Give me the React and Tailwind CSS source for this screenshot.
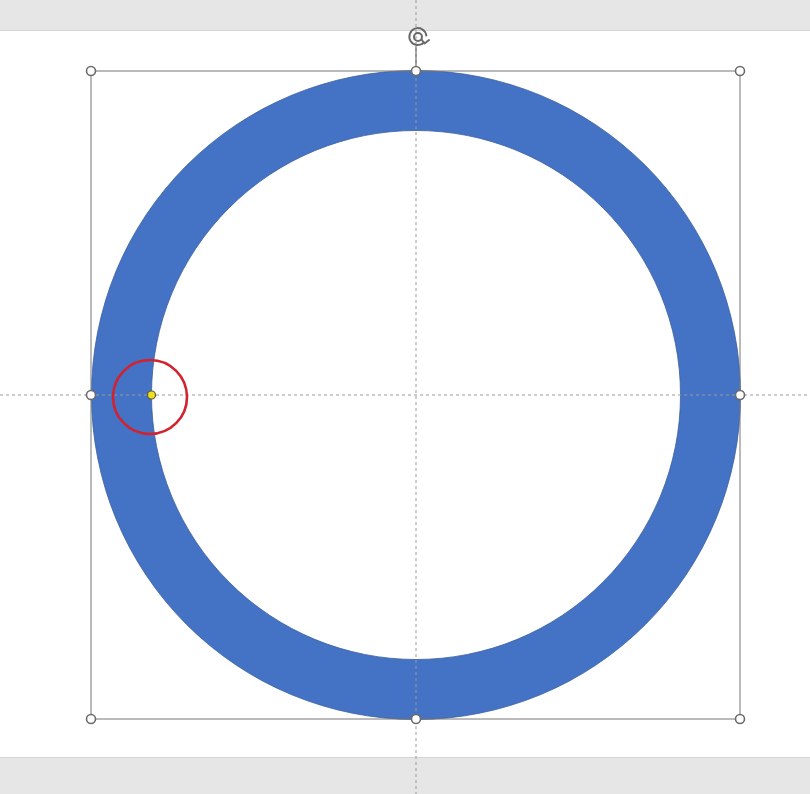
import React from "react";

// Canvas drawing: donut shape with selection frame, guides and handles
function Handle({ cx, cy }) {
  return <circle cx={cx} cy={cy} r="4.5" fill="#ffffff" stroke="#6b6b6b" strokeWidth="1.6" />;
}

function RotateIcon({ cx, cy }) {
  return (
    <g fill="none" stroke="#6a6a6a" strokeWidth="2" strokeLinecap="round" strokeLinejoin="round">
      <path d={`M ${cx + 6} ${cy + 5.5} A 8.5 8.5 0 1 1 ${cx + 8.3} ${cy - 1.5}`} />
      <circle cx={cx} cy={cy} r="4" />
      <path d={`M ${cx + 3.5} ${cy + 2.5} L ${cx + 6.5} ${cy + 6.5} L ${cx + 11} ${cy + 3}`} />
    </g>
  );
}

export default function App() {
  const cx = 416;
  const cy = 395;
  const outer = 324.5;
  const inner = 264.5;
  const left = 91;
  const right = 740;
  const top = 71;
  const bottom = 719;

  const ring =
    `M ${cx - outer} ${cy} A ${outer} ${outer} 0 1 0 ${cx + outer} ${cy} A ${outer} ${outer} 0 1 0 ${cx - outer} ${cy} Z ` +
    `M ${cx - inner} ${cy} A ${inner} ${inner} 0 1 0 ${cx + inner} ${cy} A ${inner} ${inner} 0 1 0 ${cx - inner} ${cy} Z`;

  return (
    <div className="relative w-[810px] h-[794px] flex flex-col overflow-hidden bg-white">
      <div className="h-[31px] bg-[#e6e6e6] border-b border-[#d6d6d6]" />
      <div className="flex-1 bg-white" />
      <div className="h-[37px] bg-[#e6e6e6] border-t border-[#d6d6d6]" />

      <svg className="absolute inset-0" width="810" height="794" viewBox="0 0 810 794">
        <path d={ring} fill="#4472c4" fillRule="evenodd" stroke="#3a5f9e" strokeWidth="0.8" />

        {/* guides */}
        <line x1={cx} y1="0" x2={cx} y2="794" stroke="#9a9a9a" strokeWidth="1" strokeDasharray="3 3" />
        <line x1="0" y1={cy} x2="810" y2={cy} stroke="#9a9a9a" strokeWidth="1" strokeDasharray="3 3" />

        {/* selection frame */}
        <rect x={left} y={top} width={right - left} height={bottom - top} fill="none" stroke="#777777" strokeWidth="1" />
        <line x1={cx} y1="46" x2={cx} y2={top} stroke="#6f6f6f" strokeWidth="1.2" />
        <RotateIcon cx={418} cy={37} />

        <Handle cx={left} cy={top} />
        <Handle cx={cx} cy={top} />
        <Handle cx={right} cy={top} />
        <Handle cx={left} cy={cy} />
        <Handle cx={right} cy={cy} />
        <Handle cx={left} cy={bottom} />
        <Handle cx={cx} cy={bottom} />
        <Handle cx={right} cy={bottom} />

        {/* adjustment handle */}
        <circle cx="151.5" cy={cy} r="4" fill="#f2df1a" stroke="#5a5a40" strokeWidth="1.2" />
        <circle cx="150" cy="397" r="37" fill="none" stroke="#d3212d" strokeWidth="2.6" />
      </svg>
    </div>
  );
}
